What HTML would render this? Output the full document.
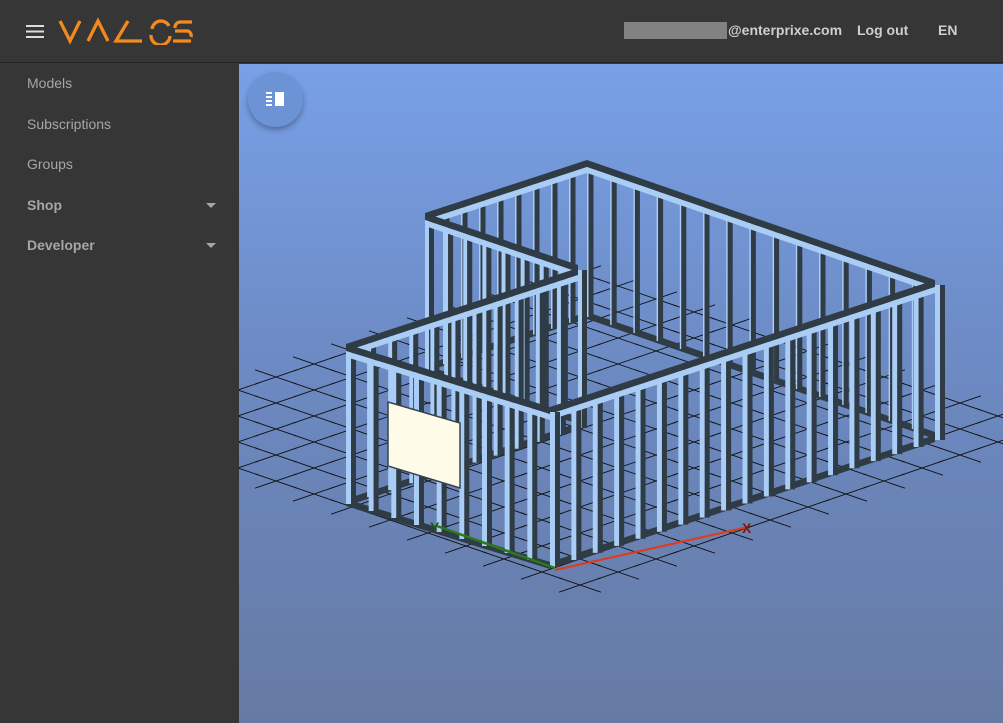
<!DOCTYPE html>
<html><head><meta charset="utf-8"><style>
*{margin:0;padding:0;box-sizing:border-box}
body{width:1003px;height:723px;overflow:hidden;background:#363636;font-family:"Liberation Sans",Roboto,sans-serif;position:relative}
.hdr{position:absolute;left:0;top:0;width:1003px;height:63px;background:#363636;border-bottom:1px solid #232323}
.side{position:absolute;left:0;top:64px;width:239px;height:659px;background:#363636}
.side div{position:absolute;left:27px;font-size:14px;color:#a6a6a6}
.side b{color:#a6a6a6}
.caret{position:absolute;left:206px;width:0;height:0;border-left:5px solid transparent;border-right:5px solid transparent;border-top:5px solid #a6a6a6}
.view{position:absolute;left:239px;top:64px;width:764px;height:659px;background:linear-gradient(#78a0e6,#6b88c0 50%,#667ba3)}
.fab{position:absolute;left:248px;top:72px;width:55px;height:55px;border-radius:50%;background:#6b93d6;box-shadow:0 3px 6px rgba(0,0,0,.3)}
.ht{position:absolute;top:22px;font-size:14px;font-weight:bold;color:#cfcfcf}
</style></head><body>
<div class="hdr">
 <svg style="position:absolute;left:26px;top:25px" width="18" height="13"><rect y="0" width="18" height="2" fill="#ddd"/><rect y="5.5" width="18" height="2" fill="#ddd"/><rect y="11" width="18" height="2" fill="#ddd"/></svg>
 <svg style="position:absolute;left:58px;top:17px" width="135" height="28" viewBox="0 0 135 28" fill="none" stroke="#f38a1e" stroke-width="3.3">
  <path d="M2 4 L12 24 L22 4"/><path d="M30 24 L40 4 L50 24"/><path d="M70 4 L58 24 L84 24"/>
  <path d="M94 12 A9 9 0 0 1 111 9"/><path d="M93 18 A9 9 0 0 0 112 19"/>
  <path d="M134 5 H122 A5.5 5.5 0 0 0 117 11"/><path d="M117 14 H130 A5 5 0 0 1 133 20"/><path d="M133 24 H115"/>
 </svg>
 <div style="position:absolute;left:624px;top:22px;width:103px;height:17px;background:#828282"></div>
 <div class="ht" style="left:728px">@enterprixe.com</div>
 <div class="ht" style="left:857px">Log out</div>
 <div class="ht" style="left:938px">EN</div>
</div>
<div class="side">
 <div style="top:11px">Models</div>
 <div style="top:52px">Subscriptions</div>
 <div style="top:92px">Groups</div>
 <div style="top:133px"><b>Shop</b></div>
 <div style="top:173px"><b>Developer</b></div>
 <span class="caret" style="top:139px"></span>
 <span class="caret" style="top:179px"></span>
</div>
<div class="view"></div>
<svg id="sc" style="position:absolute;left:239px;top:64px" width="764" height="659" viewBox="239 64 764 659"></svg>
<div class="fab"><svg style="position:absolute;left:18px;top:20px" width="20" height="15"><g fill="#fff"><rect x="0" y="0" width="6" height="2"/><rect x="0" y="4" width="6" height="2"/><rect x="0" y="8" width="6" height="2"/><rect x="0" y="12" width="6" height="2"/><rect x="9" y="0" width="9" height="14"/></g></svg></div>
<script>
var s='<g stroke="#111" stroke-width="0.9">';
var B=[580,585],N=12;
for(var i=0;i<=N;i++)for(var j=0;j<=N;j++){
 var x=B[0]-38*i+38*j,y=B[1]-13*i-13*j;
 s+='<line x1="'+(x-21)+'" y1="'+(y-7.2)+'" x2="'+(x+21)+'" y2="'+(y+7.2)+'"/><line x1="'+(x-21)+'" y1="'+(y+7.2)+'" x2="'+(x+21)+'" y2="'+(y-7.2)+'"/>';
}
s+='</g>';
function wall(ax,ay,bx,by,h,n,lw){
 var L='#a9cdf4',D='#2f3b45';
 s+='<polygon points="'+ax+','+(ay+h-5)+' '+bx+','+(by+h-5)+' '+bx+','+(by+h+2)+' '+ax+','+(ay+h+2)+'" fill="'+D+'"/>';
 for(var k=0;k<=n;k++){var t=k/n,x=ax+(bx-ax)*t,y=ay+(by-ay)*t;
  s+='<polygon points="'+x+','+y+' '+(x+lw)+','+y+' '+(x+lw)+','+(y+h)+' '+x+','+(y+h)+'" fill="'+L+'"/>';
  s+='<polygon points="'+(x+lw)+','+y+' '+(x+lw+5)+','+y+' '+(x+lw+5)+','+(y+h)+' '+(x+lw)+','+(y+h)+'" fill="'+D+'"/>';}
 s+='<polygon points="'+ax+','+(ay-5)+' '+bx+','+(by-5)+' '+bx+','+(by+2)+' '+ax+','+(ay+2)+'" fill="'+D+'"/>';
 s+='<polygon points="'+ax+','+(ay+2)+' '+bx+','+(by+2)+' '+bx+','+(by+8)+' '+ax+','+(ay+8)+'" fill="'+L+'"/>';
}
wall(425,218,587,165,152,9,1.5);
wall(587,165,935,285,152,15,1.5);
wall(425,218,578,270,152,8,4);
wall(346,349,578,273,155,11,4);
wall(550,412,935,285,155,18,5);
wall(346,349,550,412,155,9,5);
s+='<polygon points="388,402 460,423 460,488 388,466" fill="#fefce8" stroke="#36444f" stroke-width="1.5"/>';
s+='<line x1="555" y1="568" x2="437" y2="526" stroke="#2a7a1a" stroke-width="2.5"/><line x1="555" y1="570" x2="748" y2="527" stroke="#e03a1a" stroke-width="2"/>';
s+='<text x="430" y="532" font-size="14" font-weight="bold" fill="#1a5a10" font-family="Liberation Sans">Y</text><text x="742" y="533" font-size="14" font-weight="bold" fill="#7a1a10" font-family="Liberation Sans">X</text>';
document.getElementById('sc').innerHTML=s;
</script>
</body></html>
